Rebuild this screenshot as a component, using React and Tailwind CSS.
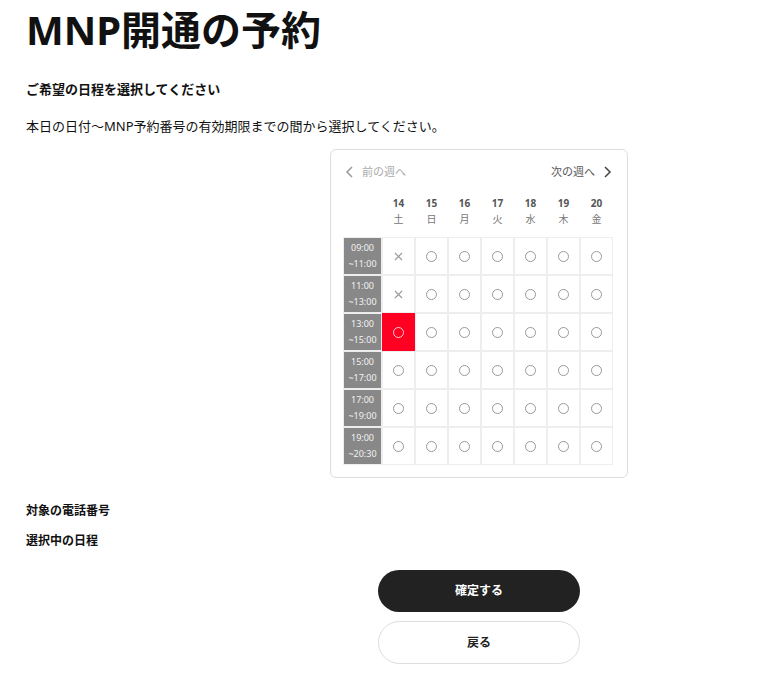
import React, { useState } from 'react';

const days = [
    { d: '14', w: '土' },
    { d: '15', w: '日' },
    { d: '16', w: '月' },
    { d: '17', w: '火' },
    { d: '18', w: '水' },
    { d: '19', w: '木' },
    { d: '20', w: '金' },
];

const slots = [
    ['09:00', '~11:00'],
    ['11:00', '~13:00'],
    ['13:00', '~15:00'],
    ['15:00', '~17:00'],
    ['17:00', '~19:00'],
    ['19:00', '~20:30'],
];

const Chevron = ({ dir, color }) => (
    <svg width="9" height="12" viewBox="0 0 9 12" fill="none">
        {dir === 'left' ? (
            <path d="M7 1 L2 6 L7 11" stroke={color} strokeWidth="1.5" />
        ) : (
            <path d="M2 1 L7 6 L2 11" stroke={color} strokeWidth="1.5" />
        )}
    </svg>
);

const Cross = () => (
    <svg width="9" height="9" viewBox="0 0 9 9" fill="none">
        <path d="M1 1 L8 8 M8 1 L1 8" stroke="#999" strokeWidth="1.1" />
    </svg>
);

const App = () => {
    const [selected, setSelected] = useState('2-0');

    const isClosed = (r, c) => c === 0 && r < 2;

    return (
        <div className="min-h-screen bg-white text-[#111] font-['Noto_Sans','Noto_Sans_CJK_JP',sans-serif] px-[26px] pt-[6px] pb-[10px]">
            <h1 className="text-[40px] leading-[48px] font-bold">MNP開通の予約</h1>

            <h2 className="mt-[26px] text-[13px] leading-[18px] font-bold">ご希望の日程を選択してください</h2>
            <p className="mt-[19px] text-[13px] leading-[18px]">
                本日の日付〜MNP予約番号の有効期限までの間から選択してください。
            </p>

            <div className="ml-[304px] mt-[14px] w-[298px] border border-[#ddd] rounded-[6px] pl-[12px] pt-[12px] pb-[12px]">
                <div className="flex items-center justify-between pl-[2px] pr-[15px] h-[20px]">
                    <button className="flex items-center gap-[8px] text-[11px] text-[#aaa]">
                        <Chevron dir="left" color="#999" />
                        <span>前の週へ</span>
                    </button>
                    <button className="flex items-center gap-[8px] text-[11px] text-[#555]">
                        <span>次の週へ</span>
                        <Chevron dir="right" color="#444" />
                    </button>
                </div>

                <div className="grid grid-cols-[39px_repeat(7,33px)] mt-[13px] mb-[10px]">
                    <div />
                    {days.map((x) => (
                        <div key={x.d} className="flex flex-col items-center">
                            <span className="text-[10px] leading-[16px] font-bold text-[#555]">{x.d}</span>
                            <span className="text-[10px] leading-[16px] text-[#777]">{x.w}</span>
                        </div>
                    ))}
                </div>

                <div className="grid grid-cols-[39px_repeat(7,33px)]">
                    {slots.map((s, r) => (
                        <React.Fragment key={s[0]}>
                            <div className="h-[38px] border border-[#eee] bg-[#888] flex flex-col items-center justify-center text-[9px] leading-[16px] text-[#f2f2f2]">
                                <span>{s[0]}</span>
                                <span>{s[1]}</span>
                            </div>
                            {days.map((x, c) => {
                                const key = `${r}-${c}`;
                                const on = selected === key;
                                return (
                                    <button
                                        key={key}
                                        onClick={() => !isClosed(r, c) && setSelected(key)}
                                        className={
                                            on
                                                ? 'h-[38px] bg-[#ff0022] flex items-center justify-center'
                                                : 'h-[38px] border border-[#eee] bg-white flex items-center justify-center'
                                        }
                                    >
                                        {isClosed(r, c) ? (
                                            <Cross />
                                        ) : (
                                            <span
                                                className={
                                                    on
                                                        ? 'w-[11px] h-[11px] rounded-full border-[1.2px] border-[#ffd0d6]'
                                                        : 'w-[11px] h-[11px] rounded-full border-[1.2px] border-[#999]'
                                                }
                                            />
                                        )}
                                    </button>
                                );
                            })}
                        </React.Fragment>
                    ))}
                </div>
            </div>

            <p className="mt-[24px] text-[12px] leading-[18px] font-bold">対象の電話番号</p>
            <p className="mt-[12px] text-[12px] leading-[18px] font-bold">選択中の日程</p>

            <div className="ml-[352px] mt-[20px] w-[202px] flex flex-col gap-[9px]">
                <button className="h-[42px] rounded-full bg-[#222] text-white text-[12px] font-bold">確定する</button>
                <button className="h-[43px] rounded-full border border-[#ddd] bg-white text-[#222] text-[12px] font-bold">戻る</button>
            </div>
        </div>
    );
};

export default App;
